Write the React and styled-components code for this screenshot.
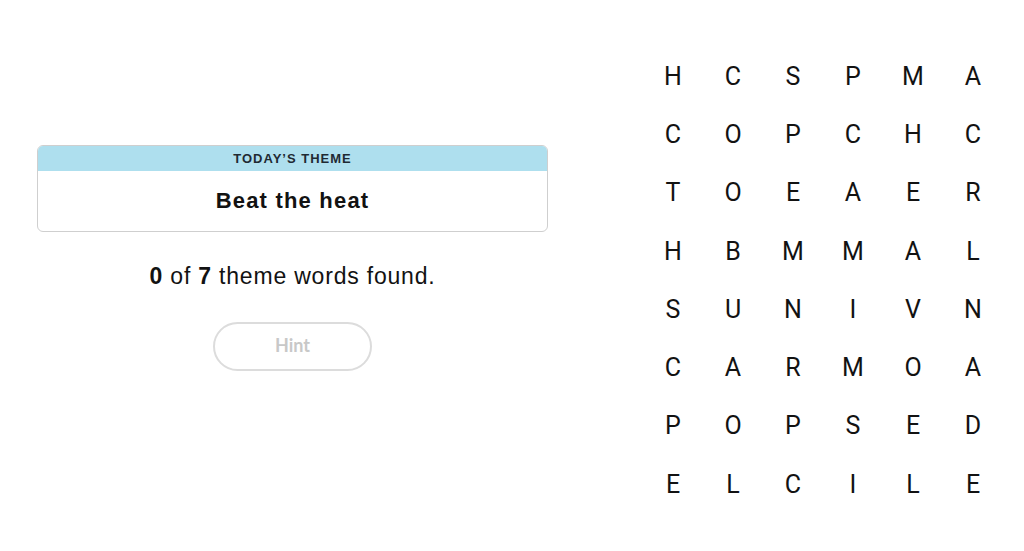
import React from "react";
import styled, { createGlobalStyle } from "styled-components";

const Global = createGlobalStyle`
  html, body { margin: 0; padding: 0; background: #fff; }
  body { font-family: "Liberation Sans", Arial, sans-serif; color: #121212; }
`;

const Page = styled.div`
  display: flex;
  align-items: flex-start;
  width: 1024px;
  height: 551px;
  box-sizing: border-box;
  padding: 47px 0 0 37px;
  gap: 95px;
  overflow: hidden;
`;

const Side = styled.div`
  width: 511px;
  margin-top: 98px;
  display: flex;
  flex-direction: column;
  align-items: center;
`;

const ThemeCard = styled.div`
  width: 100%;
  box-sizing: border-box;
  border: 1px solid #cfcfcf;
  border-radius: 6px;
  overflow: hidden;
`;

const ThemeHeader = styled.div`
  height: 25px;
  background: #aedfee;
  display: flex;
  align-items: center;
  justify-content: center;
  font-family: "Liberation Sans", Arial, sans-serif;
  font-size: 13px;
  font-weight: 700;
  letter-spacing: 1px;
  color: #1f2a33;
  text-transform: uppercase;
`;

const ThemeBody = styled.div`
  height: 60px;
  display: flex;
  align-items: center;
  justify-content: center;
  font-family: "Liberation Sans", Arial, sans-serif;
  font-size: 22px;
  font-weight: 700;
  letter-spacing: 1.2px;
  color: #121212;
`;

const Count = styled.p`
  margin: 30px 0 0;
  font-family: "Liberation Sans", Arial, sans-serif;
  font-size: 23px;
  line-height: 28px;
  letter-spacing: 0.8px;
  color: #121212;
  b { font-weight: 700; }
`;

const HintButton = styled.button`
  margin-top: 32px;
  width: 159px;
  height: 49px;
  box-sizing: border-box;
  border: 2px solid #dcdcdc;
  border-radius: 25px;
  background: #fff;
  color: #c8c8c8;
  font-family: Lato, "Liberation Sans", sans-serif;
  font-size: 18px;
  font-weight: 700;
  padding: 0 0 3px;
  cursor: default;
`;

const Grid = styled.div`
  display: grid;
  grid-template-columns: repeat(6, 60px);
  grid-auto-rows: 58.3px;
`;

const Cell = styled.div`
  display: flex;
  align-items: center;
  justify-content: center;
  font-family: Roboto, "Liberation Sans", sans-serif;
  font-size: 25px;
  font-weight: 400;
  color: #121212;
`;

const rows = [
  "HCSPMA",
  "COPCHC",
  "TOEAER",
  "HBMMAL",
  "SUNIVN",
  "CARMOA",
  "POPSED",
  "ELCILE",
];

export default function App() {
  return (
    <>
      <Global />
      <Page>
        <Side>
          <ThemeCard>
            <ThemeHeader>Today’s Theme</ThemeHeader>
            <ThemeBody>Beat the heat</ThemeBody>
          </ThemeCard>
          <Count>
            <b>0</b> of <b>7</b> theme words found.
          </Count>
          <HintButton>Hint</HintButton>
        </Side>
        <Grid>
          {rows.map((r, i) =>
            r.split("").map((ch, j) => <Cell key={`${i}-${j}`}>{ch}</Cell>)
          )}
        </Grid>
      </Page>
    </>
  );
}
